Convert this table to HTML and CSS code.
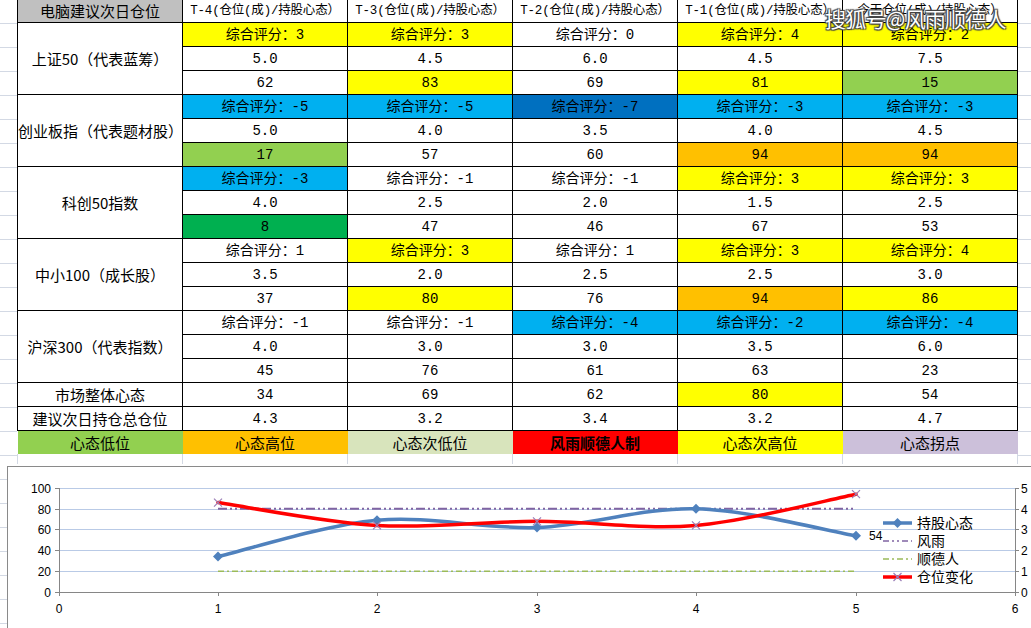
FILE: index.html
```html
<!DOCTYPE html>
<html lang="zh-CN">
<head>
<meta charset="utf-8">
<title>电脑建议次日仓位</title>
<link rel="stylesheet" href="styles.css">
</head>
<body>
<div class="page">
  <div class="sheet">
    <table class="grid">
      <colgroup>
        <col class="c-label"><col class="c-day"><col class="c-day"><col class="c-day"><col class="c-day"><col class="c-last">
      </colgroup>
      <thead>
        <tr>
          <th class="corner">电脑建议次日仓位</th>
          <th class="day">T-4(仓位(成)/持股心态）</th>
          <th class="day">T-3(仓位(成)/持股心态）</th>
          <th class="day">T-2(仓位(成)/持股心态）</th>
          <th class="day">T-1(仓位(成)/持股心态）</th>
          <th class="day">今天仓位(成)/持股心态）</th>
        </tr>
      </thead>
      <tbody>
        <tr>
          <td class="label" rowspan="3">上证50（代表蓝筹）</td>
          <td class="y">综合评分：3</td><td class="y">综合评分：3</td><td>综合评分：0</td><td class="y">综合评分：4</td><td class="y">综合评分：2</td>
        </tr>
        <tr><td>5.0</td><td>4.5</td><td>6.0</td><td>4.5</td><td>7.5</td></tr>
        <tr><td>62</td><td class="y">83</td><td>69</td><td class="y">81</td><td class="lg">15</td></tr>

        <tr>
          <td class="label" rowspan="3">创业板指（代表题材股）</td>
          <td class="lb">综合评分：-5</td><td class="lb">综合评分：-5</td><td class="db">综合评分：-7</td><td class="lb">综合评分：-3</td><td class="lb">综合评分：-3</td>
        </tr>
        <tr><td>5.0</td><td>4.0</td><td>3.5</td><td>4.0</td><td>4.5</td></tr>
        <tr><td class="lg">17</td><td>57</td><td>60</td><td class="or">94</td><td class="or">94</td></tr>

        <tr>
          <td class="label" rowspan="3">科创50指数</td>
          <td class="lb">综合评分：-3</td><td>综合评分：-1</td><td>综合评分：-1</td><td class="y">综合评分：3</td><td class="y">综合评分：3</td>
        </tr>
        <tr><td>4.0</td><td>2.5</td><td>2.0</td><td>1.5</td><td>2.5</td></tr>
        <tr><td class="g">8</td><td>47</td><td>46</td><td>67</td><td>53</td></tr>

        <tr>
          <td class="label" rowspan="3">中小100（成长股）</td>
          <td>综合评分：1</td><td class="y">综合评分：3</td><td>综合评分：1</td><td class="y">综合评分：3</td><td class="y">综合评分：4</td>
        </tr>
        <tr><td>3.5</td><td>2.0</td><td>2.5</td><td>2.5</td><td>3.0</td></tr>
        <tr><td>37</td><td class="y">80</td><td>76</td><td class="or">94</td><td class="y">86</td></tr>

        <tr>
          <td class="label" rowspan="3">沪深300（代表指数）</td>
          <td>综合评分：-1</td><td>综合评分：-1</td><td class="lb">综合评分：-4</td><td class="lb">综合评分：-2</td><td class="lb">综合评分：-4</td>
        </tr>
        <tr><td>4.0</td><td>3.0</td><td>3.0</td><td>3.5</td><td>6.0</td></tr>
        <tr><td>45</td><td>76</td><td>61</td><td>63</td><td>23</td></tr>

        <tr>
          <td class="label">市场整体心态</td>
          <td>34</td><td>69</td><td>62</td><td class="y">80</td><td>54</td>
        </tr>
        <tr>
          <td class="label">建议次日持仓总仓位</td>
          <td>4.3</td><td>3.2</td><td>3.4</td><td>3.2</td><td>4.7</td>
        </tr>
        <tr class="key">
          <td class="lg">心态低位</td>
          <td class="or">心态高位</td>
          <td class="pale">心态次低位</td>
          <td class="red">风雨顺德人制</td>
          <td class="y">心态次高位</td>
          <td class="lav">心态拐点</td>
        </tr>
        <tr class="blank"><td></td><td></td><td></td><td></td><td></td><td></td></tr>
      </tbody>
    </table>
  </div>

  <div class="chart">
    <svg class="plot" width="1040" height="162" viewBox="8 466 1040 162" xmlns="http://www.w3.org/2000/svg">
      <g class="gridlines" stroke="#b9cae6" stroke-width="1">
        <line x1="59" y1="487.5" x2="1015" y2="487.5"/>
        <line x1="59" y1="508.5" x2="1015" y2="508.5"/>
        <line x1="59" y1="528.5" x2="1015" y2="528.5"/>
        <line x1="59" y1="549.5" x2="1015" y2="549.5"/>
        <line x1="59" y1="570.5" x2="1015" y2="570.5"/>
      </g>
      <g stroke="#868686" stroke-width="1">
        <line x1="59.5" y1="487" x2="59.5" y2="591"/>
        <line x1="1015.5" y1="487" x2="1015.5" y2="591"/>
        <line x1="55" y1="591.5" x2="1015" y2="591.5"/>
        <line x1="55" y1="487.5" x2="59" y2="487.5"/>
        <line x1="55" y1="508.5" x2="59" y2="508.5"/>
        <line x1="55" y1="528.5" x2="59" y2="528.5"/>
        <line x1="55" y1="549.5" x2="59" y2="549.5"/>
        <line x1="55" y1="570.5" x2="59" y2="570.5"/>
        <line x1="1015" y1="487.5" x2="1019" y2="487.5"/>
        <line x1="1015" y1="508.5" x2="1019" y2="508.5"/>
        <line x1="1015" y1="528.5" x2="1019" y2="528.5"/>
        <line x1="1015" y1="549.5" x2="1019" y2="549.5"/>
        <line x1="1015" y1="570.5" x2="1019" y2="570.5"/>
        <line x1="1015" y1="591.5" x2="1019" y2="591.5"/>
        <line x1="59.5" y1="591" x2="59.5" y2="595"/>
        <line x1="218.5" y1="591" x2="218.5" y2="595"/>
        <line x1="377.5" y1="591" x2="377.5" y2="595"/>
        <line x1="537.5" y1="591" x2="537.5" y2="595"/>
        <line x1="696.5" y1="591" x2="696.5" y2="595"/>
        <line x1="856.5" y1="591" x2="856.5" y2="595"/>
        <line x1="1015.5" y1="591" x2="1015.5" y2="595"/>
      </g>
      <g class="axis-text" text-anchor="end">
        <text x="51" y="492">100</text>
        <text x="51" y="513">80</text>
        <text x="51" y="533">60</text>
        <text x="51" y="554">40</text>
        <text x="51" y="575">20</text>
        <text x="51" y="596">0</text>
      </g>
      <g class="axis-text" text-anchor="start">
        <text x="1021" y="492">5</text>
        <text x="1021" y="513">4</text>
        <text x="1021" y="533">3</text>
        <text x="1021" y="554">2</text>
        <text x="1021" y="575">1</text>
        <text x="1021" y="596">0</text>
      </g>
      <g class="axis-text" text-anchor="middle">
        <text x="59" y="612">0</text>
        <text x="218" y="612">1</text>
        <text x="377" y="612">2</text>
        <text x="537" y="612">3</text>
        <text x="696" y="612">4</text>
        <text x="856" y="612">5</text>
        <text x="1015" y="612">6</text>
      </g>

      <line x1="218" y1="570.2" x2="856" y2="570.2" stroke="#9bbb59" stroke-width="1.5" stroke-dasharray="6 3 2 3"/>
      <line x1="218" y1="507.8" x2="856" y2="507.8" stroke="#8064a2" stroke-width="2" stroke-dasharray="9 3 2 3 2 3"/>

      <path d="M218 555.6 C244.5 549.5 323.8 524 377 519.2 C430.2 514.4 483.8 528.4 537 526.5 C590.2 524.6 642.8 506.4 696 507.8 C749.2 509.2 829.3 530.3 856 534.8" fill="none" stroke="#4f81bd" stroke-width="3.5" stroke-linecap="round"/>
      <g fill="#4f81bd">
        <path d="M218 550.6 L223 555.6 L218 560.6 L213 555.6 Z"/>
        <path d="M377 514.2 L382 519.2 L377 524.2 L372 519.2 Z"/>
        <path d="M537 521.5 L542 526.5 L537 531.5 L532 526.5 Z"/>
        <path d="M696 502.8 L701 507.8 L696 512.8 L691 507.8 Z"/>
        <path d="M856 529.8 L861 534.8 L856 539.8 L851 534.8 Z"/>
      </g>

      <path d="M218 501.6 C244.5 505.4 323.8 521.3 377 524.4 C430.2 527.5 483.8 520.3 537 520.3 C590.2 520.3 642.8 528.9 696 524.4 C749.2 519.9 829.3 498.4 856 493.2" fill="none" stroke="#ff0000" stroke-width="3.5" stroke-linecap="round"/>
      <g stroke="#9b7fb8" stroke-width="1.2">
        <path d="M214 497.6 L222 505.6 M222 497.6 L214 505.6"/>
        <path d="M373 520.4 L381 528.4 M381 520.4 L373 528.4"/>
        <path d="M533 516.3 L541 524.3 M541 516.3 L533 524.3"/>
        <path d="M692 520.4 L700 528.4 M700 520.4 L692 528.4"/>
        <path d="M852 489.2 L860 497.2 M860 489.2 L852 497.2"/>
      </g>

      <text class="axis-text" x="869" y="539">54</text>

      <g class="legend">
        <line x1="883" y1="522" x2="912" y2="522" stroke="#4f81bd" stroke-width="3.5"/>
        <path d="M897.5 517 L902.5 522 L897.5 527 L892.5 522 Z" fill="#4f81bd"/>
        <text x="917" y="527">持股心态</text>
        <line x1="883" y1="540" x2="912" y2="540" stroke="#8064a2" stroke-width="1.5" stroke-dasharray="6 3 2 3 2 3"/>
        <text x="917" y="545">风雨</text>
        <line x1="883" y1="558" x2="912" y2="558" stroke="#9bbb59" stroke-width="1.5" stroke-dasharray="6 3 2 3"/>
        <text x="917" y="563">顺德人</text>
        <line x1="883" y1="576" x2="912" y2="576" stroke="#ff0000" stroke-width="3.5"/>
        <path d="M893.5 572 L901.5 580 M901.5 572 L893.5 580" stroke="#9b7fb8" stroke-width="1.2"/>
        <text x="917" y="581">仓位变化</text>
      </g>
    </svg>
  </div>

  <div class="watermark">搜狐号@风雨顺德人</div>
</div>
</body>
</html>
```

FILE: styles.css
```css
html, body {
  margin: 0;
  padding: 0;
}

body {
  width: 1031px;
  height: 628px;
  overflow: hidden;
  background-color: #ffffff;
  background-image: repeating-linear-gradient(180deg, transparent 0, transparent 23px, #d3d9e4 23px, #d3d9e4 24px);
  font-family: "Noto Sans CJK SC", "Noto Sans", sans-serif;
  color: #000;
}

.page {
  position: relative;
  width: 1031px;
  height: 628px;
  overflow: hidden;
}

.sheet {
  padding-left: 17px;
}

.grid {
  border-collapse: collapse;
  table-layout: fixed;
  width: 1001px;
  background: #fff;
}

.c-label, .c-day { width: 165px; }
.c-last { width: 175px; }

.grid th,
.grid td {
  border: 1px solid #000;
  padding: 0;
  height: 23px;
  text-align: center;
  vertical-align: middle;
  white-space: nowrap;
  overflow: hidden;
  font-weight: normal;
  font-family: "Liberation Mono", "Noto Sans CJK SC", monospace;
  font-size: 14px;
  line-height: 20px;
}

.grid thead th {
  border-top: none;
  height: 22px;
}

.grid th.corner {
  background: #c0c0c0;
  font-family: "Noto Sans CJK SC", sans-serif;
  font-size: 15px;
}

.grid th.day {
  font-size: 12.5px;
  letter-spacing: -0.2px;
}

.grid td.label {
  font-family: "Noto Sans CJK SC", sans-serif;
  font-size: 15px;
  overflow: visible;
}

.y { background: #ffff00; }
.lb { background: #00b0f0; }
.db { background: #0070c0; }
.lg { background: #92d050; }
.g { background: #00b050; }
.or { background: #ffc000; }
.pale { background: #d8e4bc; }
.lav { background: #ccc0da; }
.red { background: #ff0000; }

.grid tr.key td {
  border-left: none;
  border-right: none;
  border-bottom: none;
  font-family: "Noto Sans CJK SC", sans-serif;
  font-size: 15px;
}

.grid tr.key td.red {
  font-weight: bold;
}

.grid tr.blank td {
  border-top: none;
  border-bottom: none;
  border-left: 1px solid #d3d9e4;
  border-right: 1px solid #d3d9e4;
  height: 10px;
  line-height: 10px;
}

.chart {
  margin-left: 7px;
  margin-top: 2px;
  width: 1040px;
  height: 162px;
  border: 1px solid #8a8a8a;
  border-bottom: none;
  background: #fff;
}

.plot {
  display: block;
}

.axis-text {
  font-family: "Liberation Sans", "Open Sans", sans-serif;
  font-size: 12px;
  fill: #000;
}

.legend text {
  font-family: "Noto Sans CJK SC", sans-serif;
  font-size: 14px;
  fill: #000;
}

.watermark {
  position: absolute;
  left: 825px;
  top: 5px;
  font-family: "Noto Sans CJK SC", sans-serif;
  font-size: 21px;
  line-height: 26px;
  color: #fff;
  letter-spacing: -0.8px;
  text-shadow: 0 0 1px #333, 1px 1px 1px #444, -1px -1px 1px #444, 1px -1px 1px #444, -1px 1px 1px #444;
}
```
